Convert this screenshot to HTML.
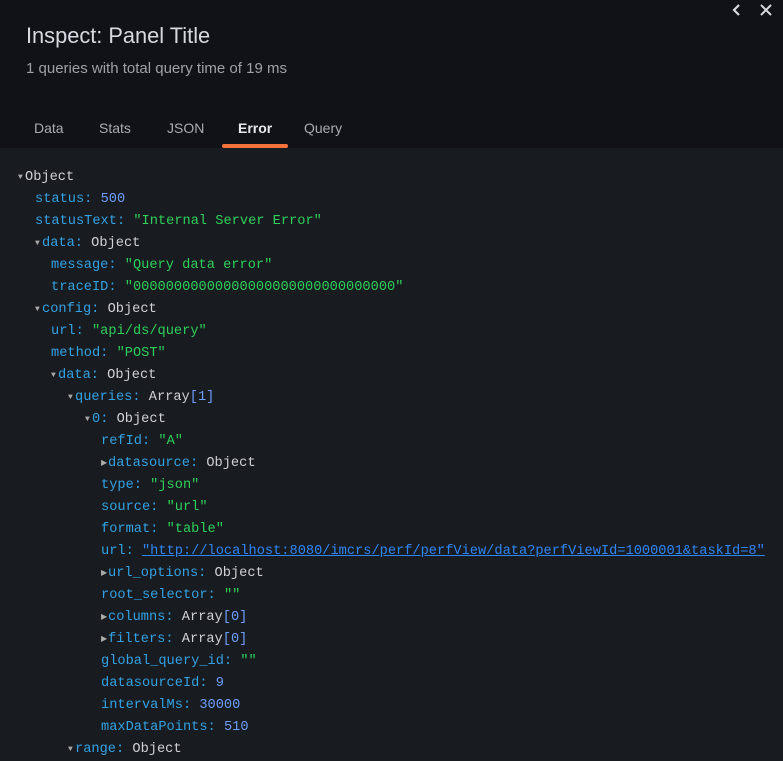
<!DOCTYPE html>
<html><head><style>
body{margin:0;width:783px;height:748px;overflow:hidden;background:#181b1f;font-family:"Liberation Sans",sans-serif}
.hdr{position:absolute;left:0;top:0;width:783px;height:148px;background:#111217}
.t{position:absolute;left:26px;top:23px;color:#d8d9e0;font-size:21.8px}
.s{position:absolute;left:26px;top:60px;color:#9fa1a8;font-size:15px}
.tab{position:absolute;top:120px;font-size:14px;color:#a9abb2}
.ul{position:absolute;left:222px;top:144px;width:66px;height:4px;border-radius:2px;background:#f5733a}
.ic{position:absolute;color:#d8d9e0}
.c{position:absolute;left:0;top:167px;font-family:"Liberation Mono",monospace;font-size:13.66px;line-height:22px;color:#d0d1d9;white-space:pre}
.k{color:#33a2e5}.n{color:#6e9fff}.g{color:#2fd05a}.a{font-size:8px;color:#aaa;display:inline-block;width:7px;vertical-align:1px}
.l{color:#2f86f7;text-decoration:underline}
.r{display:block}
</style></head><body>
<div class="hdr">
<div class="t">Inspect: Panel Title</div>
<div class="s">1 queries with total query time of 19 ms</div>
<div class="tab" style="left:34px">Data</div>
<div class="tab" style="left:99px">Stats</div>
<div class="tab" style="left:167px">JSON</div>
<div class="tab" style="left:238px;color:#e8e9ee;font-weight:bold">Error</div>
<div class="tab" style="left:304px">Query</div>
<div class="ul"></div>
<svg class="ic" style="left:730px;top:3px" width="14" height="14" viewBox="0 0 14 14"><path d="M9 2 L4 7 L9 12" stroke="#d8d9e0" stroke-width="2.2" fill="none"/></svg>
<svg class="ic" style="left:759px;top:3px" width="14" height="14" viewBox="0 0 14 14"><path d="M2 2 L12 12 M12 2 L2 12" stroke="#d8d9e0" stroke-width="2" fill="none"/></svg>
</div>
<div class="c"><span class="r" style="padding-left:18px"><span class="a">▼</span>Object</span><span class="r" style="padding-left:35px"><span class="k">status: </span><span class="n">500</span></span><span class="r" style="padding-left:35px"><span class="k">statusText: </span><span class="g">"Internal Server Error"</span></span><span class="r" style="padding-left:35px"><span class="a">▼</span><span class="k">data: </span>Object</span><span class="r" style="padding-left:51px"><span class="k">message: </span><span class="g">"Query data error"</span></span><span class="r" style="padding-left:51px"><span class="k">traceID: </span><span class="g">"00000000000000000000000000000000"</span></span><span class="r" style="padding-left:35px"><span class="a">▼</span><span class="k">config: </span>Object</span><span class="r" style="padding-left:51px"><span class="k">url: </span><span class="g">"api/ds/query"</span></span><span class="r" style="padding-left:51px"><span class="k">method: </span><span class="g">"POST"</span></span><span class="r" style="padding-left:51px"><span class="a">▼</span><span class="k">data: </span>Object</span><span class="r" style="padding-left:68px"><span class="a">▼</span><span class="k">queries: </span>Array<span class="n">[1]</span></span><span class="r" style="padding-left:85px"><span class="a">▼</span><span class="k">0: </span>Object</span><span class="r" style="padding-left:101px"><span class="k">refId: </span><span class="g">"A"</span></span><span class="r" style="padding-left:101px"><span class="a">▶</span><span class="k">datasource: </span>Object</span><span class="r" style="padding-left:101px"><span class="k">type: </span><span class="g">"json"</span></span><span class="r" style="padding-left:101px"><span class="k">source: </span><span class="g">"url"</span></span><span class="r" style="padding-left:101px"><span class="k">format: </span><span class="g">"table"</span></span><span class="r" style="padding-left:101px"><span class="k">url: </span><span class="l">"http://localhost:8080/imcrs/perf/perfView/data?perfViewId=1000001&amp;taskId=8"</span></span><span class="r" style="padding-left:101px"><span class="a">▶</span><span class="k">url_options: </span>Object</span><span class="r" style="padding-left:101px"><span class="k">root_selector: </span><span class="g">""</span></span><span class="r" style="padding-left:101px"><span class="a">▶</span><span class="k">columns: </span>Array<span class="n">[0]</span></span><span class="r" style="padding-left:101px"><span class="a">▶</span><span class="k">filters: </span>Array<span class="n">[0]</span></span><span class="r" style="padding-left:101px"><span class="k">global_query_id: </span><span class="g">""</span></span><span class="r" style="padding-left:101px"><span class="k">datasourceId: </span><span class="n">9</span></span><span class="r" style="padding-left:101px"><span class="k">intervalMs: </span><span class="n">30000</span></span><span class="r" style="padding-left:101px"><span class="k">maxDataPoints: </span><span class="n">510</span></span><span class="r" style="padding-left:68px"><span class="a">▼</span><span class="k">range: </span>Object</span></div>
</body></html>
